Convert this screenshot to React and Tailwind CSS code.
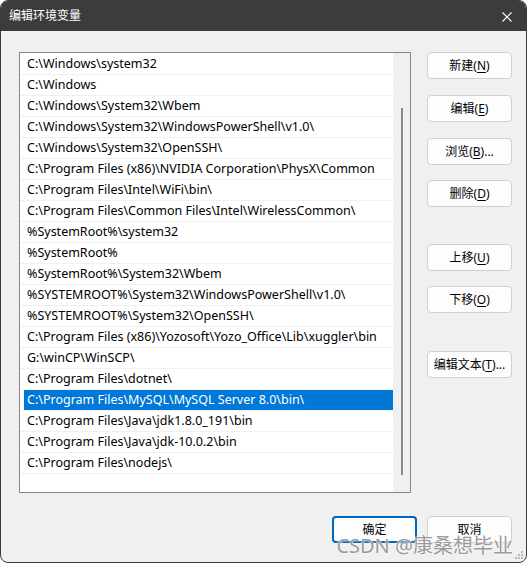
import React from 'react';

const paths = [
  'C:\\Windows\\system32',
  'C:\\Windows',
  'C:\\Windows\\System32\\Wbem',
  'C:\\Windows\\System32\\WindowsPowerShell\\v1.0\\',
  'C:\\Windows\\System32\\OpenSSH\\',
  'C:\\Program Files (x86)\\NVIDIA Corporation\\PhysX\\Common',
  'C:\\Program Files\\Intel\\WiFi\\bin\\',
  'C:\\Program Files\\Common Files\\Intel\\WirelessCommon\\',
  '%SystemRoot%\\system32',
  '%SystemRoot%',
  '%SystemRoot%\\System32\\Wbem',
  '%SYSTEMROOT%\\System32\\WindowsPowerShell\\v1.0\\',
  '%SYSTEMROOT%\\System32\\OpenSSH\\',
  'C:\\Program Files (x86)\\Yozosoft\\Yozo_Office\\Lib\\xuggler\\bin',
  'G:\\winCP\\WinSCP\\',
  'C:\\Program Files\\dotnet\\',
  'C:\\Program Files\\MySQL\\MySQL Server 8.0\\bin\\',
  'C:\\Program Files\\Java\\jdk1.8.0_191\\bin',
  'C:\\Program Files\\Java\\jdk-10.0.2\\bin',
  'C:\\Program Files\\nodejs\\',
];

const SELECTED = 16;

function WinButton({ label, hotkey, tail = '', className = '' }) {
  return (
    <button className={`h-[27px] w-[85px] rounded-[4px] border border-[#d0d0d0] bg-[#fdfdfd] text-[12px] text-black leading-none ${className}`}>
      {label}(<span className="underline underline-offset-2">{hotkey}</span>){tail}
    </button>
  );
}

export default function App() {
  return (
    <div
      className="w-[527px] h-[563px] bg-white"
      style={{ fontFamily: '"Noto Sans", "Noto Sans CJK SC", sans-serif' }}
    >
      <div className="relative w-full h-full flex flex-col rounded-[8px] border border-[#3a3a3a] overflow-hidden bg-[#f0f0f0]">
        {/* title bar */}
        <div className="h-[30px] shrink-0 bg-[#3c3c3c] flex items-center justify-between pl-[8px] pr-[14px]">
          <span className="text-[12px] text-white">编辑环境变量</span>
          <svg width="10" height="10" viewBox="0 0 10 10" className="mt-[1px]">
            <path d="M0.5 0.5 L9.5 9.5 M9.5 0.5 L0.5 9.5" stroke="#ffffff" strokeWidth="1.1" />
          </svg>
        </div>

        <div className="flex-1 flex pl-[18px] pr-[14px] pt-[21px]">
          {/* list box */}
          <div className="w-[392px] h-[441px] border border-[#828790] bg-white flex">
            <div className="flex-1 flex flex-col pt-[1px]">
              {paths.map((p, i) => (
                <div key={i} className="h-[21px] border-b border-[#f0f0f0] flex items-stretch">
                  <div
                    className={`ml-[4px] flex-1 text-[12.5px] flex items-center pl-[3px] pt-[1px] whitespace-nowrap ${
                      i === SELECTED ? 'bg-[#0078d7] text-white' : 'text-black'
                    }`}
                  >
                    {p}
                  </div>
                </div>
              ))}
            </div>
            <div className="w-[17px] bg-[#f0f0f0] flex justify-center pt-[55px] pb-[17px]">
              <div className="w-[2px] h-full bg-[#8a8a8a]" />
            </div>
          </div>

          {/* side buttons */}
          <div className="ml-auto flex flex-col">
            <WinButton label="新建" hotkey="N" />
            <WinButton label="编辑" hotkey="E" className="mt-[16px]" />
            <WinButton label="浏览" hotkey="B" tail="..." className="mt-[16px]" />
            <WinButton label="删除" hotkey="D" className="mt-[15px]" />
            <WinButton label="上移" hotkey="U" className="mt-[37px]" />
            <WinButton label="下移" hotkey="O" className="mt-[15px]" />
            <WinButton label="编辑文本" hotkey="T" tail="..." className="mt-[38px]" />
          </div>
        </div>

        {/* bottom buttons */}
        <div className="h-[46px] shrink-0 flex justify-end items-start gap-[10px] pr-[14px]">
          <button className="h-[27px] w-[85px] rounded-[4px] border-2 border-[#0067c0] bg-[#fdfdfd] text-[12px] text-black leading-none">
            确定
          </button>
          <button className="h-[27px] w-[85px] rounded-[4px] border border-[#d0d0d0] bg-[#fdfdfd] text-[12px] text-black leading-none">
            取消
          </button>
        </div>

        {/* watermark */}
        <span
          className="absolute right-[13px] bottom-[2px] text-[20px] leading-none pb-[4px] text-[#8c8c8c]/90 whitespace-nowrap"
          style={{ textShadow: '0 0 2px #ffffff, 0 0 1px #ffffff' }}
        >
          CSDN @康桑想毕业
        </span>

        {/* resize grip */}
        <svg width="10" height="10" viewBox="0 0 10 10" className="absolute right-[2px] bottom-[2px]">
          <rect x="7" y="1" width="2" height="2" fill="#b8b8b8" />
          <rect x="4" y="4" width="2" height="2" fill="#b8b8b8" />
          <rect x="7" y="4" width="2" height="2" fill="#b8b8b8" />
          <rect x="1" y="7" width="2" height="2" fill="#b8b8b8" />
          <rect x="4" y="7" width="2" height="2" fill="#b8b8b8" />
          <rect x="7" y="7" width="2" height="2" fill="#b8b8b8" />
        </svg>
      </div>
    </div>
  );
}
